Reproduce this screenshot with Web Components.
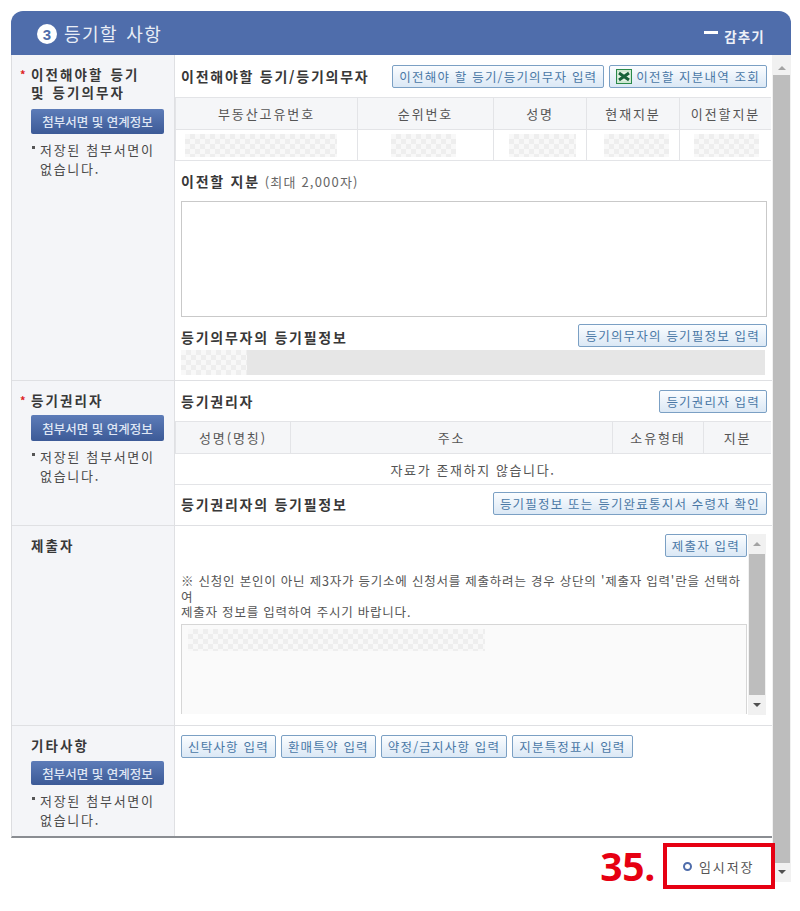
<!DOCTYPE html>
<html lang="ko">
<head>
<meta charset="utf-8">
<title>등기할 사항</title>
<style>
  html, body { margin: 0; padding: 0; background: #fff; }
  body { font-family: "Noto Sans CJK KR", "Noto Sans", sans-serif; color: #444; }
</style>
</head>
<body>
<reg-page>
  <reg-header slot="header" title-text="등기할 사항" step="3"></reg-header>

  <reg-row slot="rows" style="--row-h: 326px">
    <reg-side required attach style="--btn-top: 8px">
      <span slot="label">이전해야할 등기<br>및 등기의무자</span>
    </reg-side>
    <reg-section-head style="--head-h: 42px">
      <span slot="title">이전해야할 등기/등기의무자</span>
      <reg-button>이전해야 할 등기/등기의무자 입력</reg-button>
      <reg-button excel>이전할 지분내역 조회</reg-button>
    </reg-section-head>
    <reg-table columns="182px 136px 93px 93px 1fr"
      heads="부동산고유번호|순위번호|성명|현재지분|이전할지분"
      masks="9:152|33:65|15:67|17:65|14:65"></reg-table>
    <reg-share></reg-share>
    <reg-section-head style="--head-h: 26px; --head-top: 5px; --title-shift: 3px">
      <span slot="title">등기의무자의 등기필정보</span>
      <reg-button>등기의무자의 등기필정보 입력</reg-button>
    </reg-section-head>
    <reg-maskbar></reg-maskbar>
  </reg-row>

  <reg-row slot="rows" style="--row-h: 145px">
    <reg-side required attach style="--btn-top: 6px; --attach-h: 26px">
      <span slot="label">등기권리자</span>
    </reg-side>
    <reg-section-head style="--head-h: 40px">
      <span slot="title">등기권리자</span>
      <reg-button>등기권리자 입력</reg-button>
    </reg-section-head>
    <reg-table columns="115px 322px 91px 1fr"
      heads="성명(명칭)|주소|소유형태|지분"
      empty="자료가 존재하지 않습니다."></reg-table>
    <reg-section-head style="--head-h: 36px; --title-shift: 1px">
      <span slot="title">등기권리자의 등기필정보</span>
      <reg-button>등기필정보 또는 등기완료통지서 수령자 확인</reg-button>
    </reg-section-head>
  </reg-row>

  <reg-row slot="rows" style="--row-h: 200px">
    <reg-side>
      <span slot="label">제출자</span>
    </reg-side>
    <reg-submitter></reg-submitter>
  </reg-row>

  <reg-row slot="rows" style="--row-h: 110px" last>
    <reg-side attach style="--btn-top: 7px; --attach-h: 24px">
      <span slot="label">기타사항</span>
    </reg-side>
    <reg-extra>
      <reg-button>신탁사항 입력</reg-button>
      <reg-button>환매특약 입력</reg-button>
      <reg-button>약정/금지사항 입력</reg-button>
      <reg-button>지분특정표시 입력</reg-button>
    </reg-extra>
  </reg-row>

  <reg-footer slot="footer"></reg-footer>
</reg-page>

<script>
const KR = '"Noto Sans CJK KR", "Noto Sans", sans-serif';

const checker = `
  background-color: #f8f8f8;
  background-image:
    linear-gradient(45deg, #eeeeee 25%, transparent 25%, transparent 75%, #eeeeee 75%),
    linear-gradient(45deg, #eeeeee 25%, transparent 25%, transparent 75%, #eeeeee 75%);
  background-size: 10px 10px;
  background-position: 0 0, 5px 5px;
`;

class RegPage extends HTMLElement {
  constructor() {
    super();
    this.attachShadow({ mode: 'open' });
    this.shadowRoot.innerHTML = `
      <style>
        :host { display: block; width: 800px; height: 911px; box-sizing: border-box; padding: 11px 9px 0 11px; overflow: hidden; }
        .body { display: flex; }
        .main { width: 761px; box-sizing: border-box; }
        .rows { border-bottom: 2px solid #8a8d92; border-left: 1px solid #dcdde0; }
      </style>
      <slot name="header"></slot>
      <div class="body">
        <div class="main">
          <div class="rows"><slot name="rows"></slot></div>
          <slot name="footer"></slot>
        </div>
        <reg-scrollbar style="--sb-w: 19px; --sb-h: 827px; --thumb-top: 20px; --thumb-bottom: 19px; --thumb-bg: #bdbdbd; --up-top: 7px"></reg-scrollbar>
      </div>
    `;
  }
}

class RegHeader extends HTMLElement {
  constructor() {
    super();
    this.attachShadow({ mode: 'open' });
    this.shadowRoot.innerHTML = `
      <style>
        :host { display: flex; align-items: center; justify-content: space-between; height: 44px; background: #4f6dab; border-radius: 12px 12px 0 0; padding: 0 26px 0 26px; color: #fff; }
        .left { display: flex; align-items: center; gap: 7px; margin-top: 2px; }
        .num { width: 20px; height: 20px; border-radius: 50%; background: #fff; color: #4f6dab; display: flex; align-items: center; justify-content: center; font: 700 15px "Liberation Sans", sans-serif; }
        .title { font-size: 18px; letter-spacing: 1.4px; color: #e9edf6; line-height: 20px; font-family: ${KR}; word-spacing: 2px; margin-top: -2px; }
        .toggle { display: flex; align-items: center; gap: 6px; font-size: 13.5px; font-weight: 700; letter-spacing: 1.2px; margin-top: 5px; color: #eef1f8; }
        .dash { width: 14px; height: 3px; background: #fff; margin-top: -6px; }
      </style>
      <div class="left"><span class="num">${this.getAttribute('step')}</span><span class="title">${this.getAttribute('title-text')}</span></div>
      <div class="toggle"><span class="dash"></span><span>감추기</span></div>
    `;
  }
}

class RegRow extends HTMLElement {
  constructor() {
    super();
    this.attachShadow({ mode: 'open' });
    this.shadowRoot.innerHTML = `
      <style>
        :host { display: grid; grid-template-columns: 162px 1fr; height: var(--row-h); border-bottom: 1px solid #dfe0e3; box-sizing: border-box; }
        :host([last]) { border-bottom: 0; }
        .content { border-left: 1px solid #dfe0e3; min-width: 0; }
      </style>
      <slot name="side-area"></slot>
      <div class="content"><slot></slot></div>
    `;
  }
  connectedCallback() {
    const side = this.querySelector('reg-side');
    if (side) side.slot = 'side-area';
  }
}

class RegSide extends HTMLElement {
  constructor() {
    super();
    this.attachShadow({ mode: 'open' });
    const required = this.hasAttribute('required');
    const attach = this.hasAttribute('attach');
    this.shadowRoot.innerHTML = `
      <style>
        :host { display: block; background: #f4f5f8; padding: 10px 9px 0 19px; box-sizing: border-box; height: 100%; }
        .label { position: relative; font-size: 13.5px; font-weight: 700; color: #383838; line-height: 18px; letter-spacing: 2.1px; word-spacing: 1px; white-space: nowrap; }
        .star { position: absolute; left: -11px; top: 0; color: #d22; font-size: 11px; line-height: 18px; }
        .attach { margin-top: var(--btn-top, 8px); width: 133px; height: var(--attach-h, 25px); box-sizing: border-box; border-radius: 2px; background: linear-gradient(#5d7cb8, #3c5a97); color: #dfe6f4; font-size: 12.5px; font-weight: 500; display: flex; align-items: center; justify-content: center; white-space: nowrap; letter-spacing: 0; }
        .note { position: relative; margin-top: 7px; padding-left: 9px; font-size: 13px; line-height: 18.5px; letter-spacing: 1.7px; color: #4a4a4a; white-space: nowrap; }
        .note::before { content: ""; position: absolute; left: 1px; top: 5px; width: 3px; height: 3px; background: #555; }
      </style>
      <div class="label">${required ? '<span class="star">*</span>' : ''}<slot name="label"></slot></div>
      ${attach ? `<div class="attach">첨부서면 및 연계정보</div>
      <div class="note">저장된 첨부서면이<br>없습니다.</div>` : ''}
    `;
  }
}

class RegSectionHead extends HTMLElement {
  constructor() {
    super();
    this.attachShadow({ mode: 'open' });
    this.shadowRoot.innerHTML = `
      <style>
        :host { display: flex; align-items: center; height: var(--head-h); margin-top: var(--head-top, 0); padding: 0 5px 0 6px; box-sizing: border-box; }
        .title { flex: 1; font-size: 14px; font-weight: 700; color: #383838; letter-spacing: 1.75px; white-space: nowrap; margin-top: var(--title-shift, 0); }
        .actions { display: flex; gap: 5px; }
      </style>
      <div class="title"><slot name="title"></slot></div>
      <div class="actions"><slot></slot></div>
    `;
  }
}

class RegButton extends HTMLElement {
  constructor() {
    super();
    this.attachShadow({ mode: 'open' });
    const icon = this.hasAttribute('excel') ? `
      <svg width="16" height="15" viewBox="0 0 16 15" aria-hidden="true">
        <rect x=".5" y=".5" width="15" height="14" fill="#cfe8d2" stroke="#2a8a4a"/>
        <rect x="2" y="3" width="12" height="9" fill="#e6f3e6"/>
        <path d="M3 4 L13 11 M13 4 L3 11" stroke="#17623a" stroke-width="3"/>
      </svg>` : '';
    this.shadowRoot.innerHTML = `
      <style>
        :host { display: inline-flex; align-items: center; justify-content: center; gap: 4px; height: 23px; padding: 0 6px; box-sizing: border-box; border: 1px solid #7ba0c4; border-radius: 2px; background: linear-gradient(#fbfdff, #dbe8f5); color: #4a78a6; font-size: 12.5px; letter-spacing: 1.2px; white-space: nowrap; flex: none; }
      </style>
      ${icon}<slot></slot>
    `;
  }
}

class RegTable extends HTMLElement {
  constructor() {
    super();
    this.attachShadow({ mode: 'open' });
    const heads = this.getAttribute('heads').split('|');
    const masks = this.getAttribute('masks');
    const empty = this.getAttribute('empty');
    const ths = heads.map(h => `<div class="th">${h}</div>`).join('');
    const body = masks
      ? masks.split('|').map(m => {
          const [left, w] = m.split(':');
          return `<div class="td" style="padding-left:${left}px"><span class="mask" style="width:${w}px"></span></div>`;
        }).join('')
      : `<div class="empty">${empty}</div>`;
    this.shadowRoot.innerHTML = `
      <style>
        :host { display: grid; grid-template-columns: ${this.getAttribute('columns')}; border-top: 1px solid #e3e4e7; font-size: 13px; letter-spacing: 1.9px; color: #555; width: 596px; }
        .th { height: 31px; background: #f5f6f8; display: flex; align-items: center; justify-content: center; border-left: 1px solid #e3e4e7; border-bottom: 1px solid #e3e4e7; }
        .th:first-child { border-left: 0; }
        .td { height: 30px; display: flex; align-items: center; border-left: 1px solid #e3e4e7; border-bottom: 1px solid #e3e4e7; min-width: 0; }
        .td:nth-child(${heads.length + 1}) { border-left: 0; }
        .mask { display: block; height: 23px; flex: none; ${checker} }
        .empty { grid-column: 1 / -1; height: 30px; display: flex; align-items: center; justify-content: center; letter-spacing: 1.6px; border-bottom: 1px solid #e3e4e7; }
      </style>
      ${ths}${body}
    `;
  }
}

class RegShare extends HTMLElement {
  constructor() {
    super();
    this.attachShadow({ mode: 'open' });
    this.shadowRoot.innerHTML = `
      <style>
        :host { display: block; padding: 11px 5px 0 6px; }
        .label { font-size: 13px; line-height: 18px; letter-spacing: 1.2px; color: #666; }
        b { color: #383838; font-size: 14px; letter-spacing: 1.75px; }
        .box { margin-top: 10px; height: 114px; border: 1px solid #c9c9c9; background: #fff; }
      </style>
      <div class="label"><b>이전할 지분</b> (최대 2,000자)</div>
      <div class="box"></div>
    `;
  }
}

class RegMaskbar extends HTMLElement {
  constructor() {
    super();
    this.attachShadow({ mode: 'open' });
    this.shadowRoot.innerHTML = `
      <style>
        :host { display: block; height: 25px; margin: 2px 7px 0 6px; background: #e6e6e6; }
        .mask { display: block; width: 66px; height: 100%; ${checker} }
      </style>
      <span class="mask"></span>
    `;
  }
}

class RegScrollbar extends HTMLElement {
  constructor() {
    super();
    this.attachShadow({ mode: 'open' });
    this.shadowRoot.innerHTML = `
      <style>
        :host { display: block; position: relative; flex: none; width: var(--sb-w); height: var(--sb-h); background: #f1f1f1; }
        .thumb { position: absolute; left: 1px; right: 1px; top: var(--thumb-top); bottom: var(--thumb-bottom); background: var(--thumb-bg); }
        .up, .down { position: absolute; left: 50%; margin-left: -4px; width: 0; height: 0; border: 4px solid transparent; }
        .up { top: var(--up-top, 3px); border-bottom: 4px solid #a3a3a3; }
        .down { bottom: 4px; border-top: 4px solid #505050; }
      </style>
      <span class="up"></span><div class="thumb"></div><span class="down"></span>
    `;
  }
}

class RegSubmitter extends HTMLElement {
  constructor() {
    super();
    this.attachShadow({ mode: 'open' });
    this.shadowRoot.innerHTML = `
      <style>
        :host { display: flex; padding: 8px 4px 0 6px; height: 190px; box-sizing: border-box; }
        .col { width: 566px; flex: none; }
        .actions { display: flex; justify-content: flex-end; }
        .notice { margin: 16px 0 0; font-size: 12.5px; line-height: 15.5px; letter-spacing: .78px; color: #555; word-break: break-all; }
        .box { margin-top: 4px; height: 90px; box-sizing: border-box; border: 1px solid #d6d6d6; border-bottom: 0; background: #fafafa; padding: 4px 0 0 6px; }
        .mask { display: block; width: 297px; height: 22px; ${checker} }
        reg-scrollbar { margin-left: 1px; }
      </style>
      <div class="col">
        <div class="actions"><reg-button>제출자 입력</reg-button></div>
        <p class="notice">※ 신청인 본인이 아닌 제3자가 등기소에 신청서를 제출하려는 경우 상단의 '제출자 입력'란을 선택하여<br>제출자 정보를 입력하여 주시기 바랍니다.</p>
        <div class="box"><span class="mask"></span></div>
      </div>
      <reg-scrollbar style="--sb-w: 18px; --sb-h: 181px; --thumb-top: 20px; --thumb-bottom: 20px; --thumb-bg: #bdbdbd; --up-top: 4px"></reg-scrollbar>
    `;
  }
}

class RegExtra extends HTMLElement {
  constructor() {
    super();
    this.attachShadow({ mode: 'open' });
    this.shadowRoot.innerHTML = `
      <style>
        :host { display: flex; gap: 5px; padding: 9px 0 0 6px; }
      </style>
      <slot></slot>
    `;
  }
}

class RegFooter extends HTMLElement {
  constructor() {
    super();
    this.attachShadow({ mode: 'open' });
    this.shadowRoot.innerHTML = `
      <style>
        :host { display: flex; position: relative; z-index: 1; justify-content: flex-end; align-items: center; gap: 8px; height: 46px; margin-top: 5px; margin-right: -3px; }
        .mark { font: 700 39px "Open Sans", "Liberation Sans", sans-serif; color: #e60012; line-height: 46px; letter-spacing: -.3px; }
        .save { width: 112px; height: 46px; box-sizing: border-box; border: 4px solid #e60012; display: flex; align-items: center; gap: 7px; padding-left: 16px; font-size: 13px; letter-spacing: 1.9px; color: #555; background: #fff; }
        .dot { width: 5px; height: 5px; border: 2.5px solid #4f6dab; border-radius: 50%; background: #fff; flex: none; }
      </style>
      <span class="mark">35.</span>
      <div class="save"><span class="dot"></span><span>임시저장</span></div>
    `;
  }
}

customElements.define('reg-page', RegPage);
customElements.define('reg-header', RegHeader);
customElements.define('reg-row', RegRow);
customElements.define('reg-side', RegSide);
customElements.define('reg-section-head', RegSectionHead);
customElements.define('reg-button', RegButton);
customElements.define('reg-table', RegTable);
customElements.define('reg-share', RegShare);
customElements.define('reg-maskbar', RegMaskbar);
customElements.define('reg-scrollbar', RegScrollbar);
customElements.define('reg-submitter', RegSubmitter);
customElements.define('reg-extra', RegExtra);
customElements.define('reg-footer', RegFooter);
</script>
</body>
</html>
